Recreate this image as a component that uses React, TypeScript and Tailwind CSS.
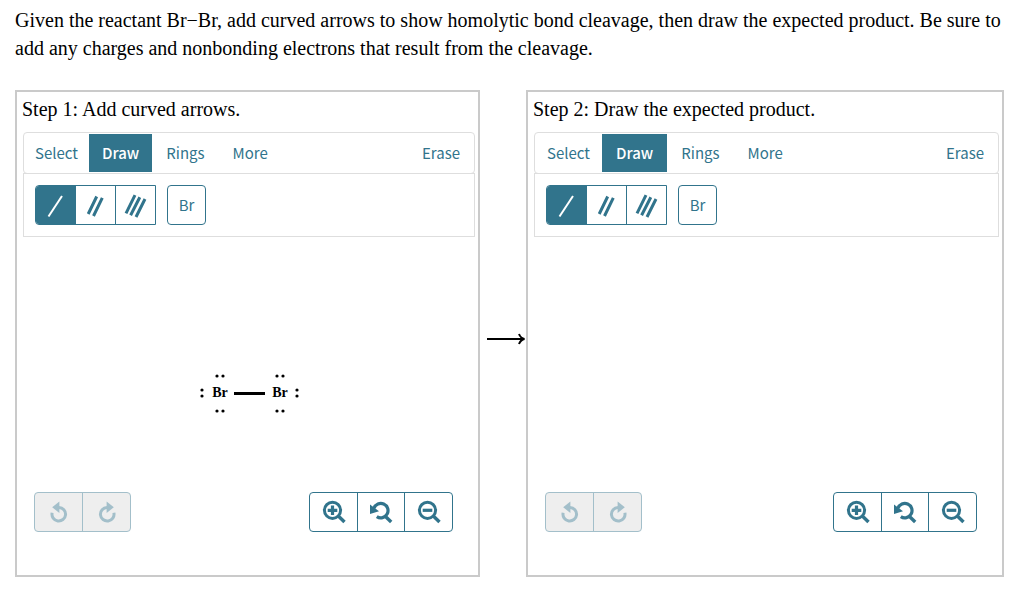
import type { ReactNode } from 'react';
import { clsx } from 'clsx';

interface EditorPanelProps {
  id: string;
  title: string;
  wide?: boolean;
  children?: ReactNode;
}

const BONDS = [
  { name: 'Single bond', width: 2, path: 'M4.5 23.5L18 3' },
  { name: 'Double bond', width: 3, path: 'M4.2 21L12.7 3.5M9.5 23L18.3 4.8' },
  { name: 'Triple bond', width: 3, path: 'M2 20.3L11 2.2M6.6 22.3L15.8 4.2M12 24L21 6' },
];

function UndoIcon({ flip = false }: { flip?: boolean }) {
  return (
    <svg viewBox="0 0 24 24" className={clsx('w-6 h-6', flip && '-scale-x-100')} fill="none">
      <path d="M5.1 12.8A6.8 6.8 0 1 0 12 7.4" stroke="currentColor" strokeWidth="3" />
      <path d="M5.2 7.3L12.4 1.6V13Z" fill="currentColor" />
    </svg>
  );
}

function ZoomIcon({ plus = false }: { plus?: boolean }) {
  return (
    <svg viewBox="0 0 24 24" className="w-6 h-6" fill="none" stroke="currentColor">
      <circle cx="10.5" cy="10.3" r="8.1" strokeWidth="3" />
      <path d="M16.3 16L22.5 22" strokeWidth="3.4" />
      <path d={plus ? 'M5.7 10.3H15.3M10.5 5.5V15.1' : 'M5.7 10.3H15.3'} strokeWidth="3.2" />
    </svg>
  );
}

function ZoomResetIcon() {
  return (
    <svg viewBox="0 0 24 24" className="w-6 h-6" fill="none" stroke="currentColor">
      <path d="M5 8.3A7.2 7.2 0 1 1 7.8 16.6" strokeWidth="3.2" />
      <path d="M16 16L22.2 22" strokeWidth="3.4" />
      <path d="M1 4.6V14L10 11.2Z" fill="currentColor" stroke="none" />
    </svg>
  );
}

// Br-Br with three lone pairs on each atom
function Bromine() {
  const dots = [
    [19, 6], [25, 6], [19, 41], [25, 41], [4, 20], [4, 26],
    [79, 6], [85, 6], [79, 41], [85, 41], [99, 20], [99, 26],
  ];
  return (
    <svg width="104" height="48" viewBox="0 0 104 48" role="img" aria-label="Bromine molecule">
      {dots.map(([x, y]) => (
        <circle key={`${x}-${y}`} cx={x} cy={y} r="1.6" />
      ))}
      <path d="M36 23.5H67" stroke="black" strokeWidth="3" />
      <g className="font-['Liberation_Serif',serif] text-[14px] font-bold" textAnchor="middle">
        <text x="22" y="27">Br</text>
        <text x="82" y="27">Br</text>
      </g>
    </svg>
  );
}

function EditorPanel({ id, title, wide = false, children }: EditorPanelProps) {
  const groupButton = 'flex h-[38px] items-center justify-center';

  return (
    <section
      aria-labelledby={id}
      className="flex flex-col border-2 border-[#cacaca] pt-[3px] pb-[43px] pl-[6px] pr-[3px]"
    >
      <h2 id={id} className="-ml-px text-[20px] leading-7">
        {title}
      </h2>

      <div className="mt-[9px] font-['Noto_Sans_CJK_JP',sans-serif] text-[15px] text-[#31748c]">
        {/* Tabs */}
        <div className="flex items-center rounded border border-[#dedede] py-px">
          <button className={clsx('h-[38px]', wide ? 'px-3' : 'px-[11px]')}>Select</button>
          <button
            className={clsx(
              'h-[38px] bg-[#31748c] font-medium text-white',
              wide ? 'px-[14px]' : 'px-[13px]',
            )}
          >
            Draw
          </button>
          <button className="h-[38px] px-[14px]">Rings</button>
          <button className="h-[38px] px-[14px]">More</button>
          <button className="ml-auto h-[38px] px-[14px]">Erase</button>
        </div>

        {/* Bond tools */}
        <div className="-mt-px flex gap-[11px] border border-[#dedede] px-[11px] py-[11px]">
          <div className="flex overflow-hidden rounded-l border border-[#31748c]">
            {BONDS.map((bond, i) => (
              <button
                key={bond.name}
                aria-label={bond.name}
                className={clsx(
                  'flex h-[38px] items-center justify-center',
                  i === 0 ? 'w-[39px] bg-[#31748c] text-white' : 'w-10 border-l border-[#31748c]',
                )}
              >
                <svg viewBox="0 0 24 24" className="w-6 h-6 overflow-visible" fill="none">
                  <path d={bond.path} stroke="currentColor" strokeWidth={bond.width} />
                </svg>
              </button>
            ))}
          </div>
          <button className="h-10 w-[39px] rounded border border-[#31748c]">Br</button>
        </div>
      </div>

      {/* Canvas */}
      <div className="flex h-[255px] items-end justify-center pb-[74px] pl-[2px]">{children}</div>

      <div className="flex justify-between pl-[11px] pr-[22px]">
        <div className="flex rounded border border-[#a3bfca] bg-[#eeeeee] text-[#a3bfca]">
          <button disabled aria-label="Undo" className={clsx(groupButton, 'w-[47px]')}>
            <UndoIcon />
          </button>
          <button
            disabled
            aria-label="Redo"
            className={clsx(groupButton, 'w-12 border-l border-[#a3bfca]')}
          >
            <UndoIcon flip />
          </button>
        </div>
        <div className="flex rounded border border-[#31748c] text-[#31748c]">
          <button aria-label="Zoom in" className={clsx(groupButton, 'w-[47px]')}>
            <ZoomIcon plus />
          </button>
          <button
            aria-label="Reset zoom"
            className={clsx(groupButton, 'w-12 border-x border-[#31748c]')}
          >
            <ZoomResetIcon />
          </button>
          <button aria-label="Zoom out" className={clsx(groupButton, 'w-[47px]')}>
            <ZoomIcon />
          </button>
        </div>
      </div>
    </section>
  );
}

export default function App() {
  return (
    <main className="bg-white pt-[6px] pb-4 pl-[15px] pr-5 font-['Liberation_Serif',serif] text-black">
      <p className="text-[20px] leading-7">
        Given the reactant Br−Br, add curved arrows to show homolytic bond cleavage, then draw the
        expected product. Be sure to add any charges and nonbonding electrons that result from the
        cleavage.
      </p>

      <div className="mt-7 grid grid-cols-[465fr_46px_478fr]">
        <EditorPanel id="step-1" title="Step 1: Add curved arrows.">
          <Bromine />
        </EditorPanel>
        <div className="flex items-center justify-end pt-[10px]">
          <svg
            width="40"
            height="14"
            viewBox="0 0 40 14"
            fill="none"
            stroke="black"
            strokeWidth="2"
          >
            <path d="M1 7H38M33 2C34 4.5 36 6.5 38.5 7C36 7.5 34 9.5 33 12" />
          </svg>
        </div>
        <EditorPanel id="step-2" title="Step 2: Draw the expected product." wide />
      </div>
    </main>
  );
}
